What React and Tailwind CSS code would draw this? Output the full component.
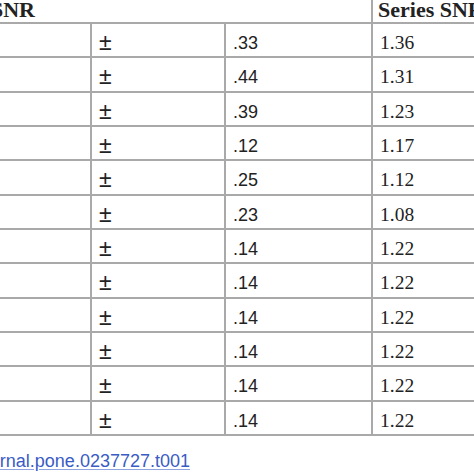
import React from 'react';

const rows = [
  { sd: '.33', series: '1.36' },
  { sd: '.44', series: '1.31' },
  { sd: '.39', series: '1.23' },
  { sd: '.12', series: '1.17' },
  { sd: '.25', series: '1.12' },
  { sd: '.23', series: '1.08' },
  { sd: '.14', series: '1.22' },
  { sd: '.14', series: '1.22' },
  { sd: '.14', series: '1.22' },
  { sd: '.14', series: '1.22' },
  { sd: '.14', series: '1.22' },
  { sd: '.14', series: '1.22' },
];

const serif = "font-['Liberation_Serif',serif]";
const sans = "font-['Liberation_Sans',Arial,sans-serif]";

const App = () => {
  return (
    <div className="w-[474px] h-[474px] overflow-hidden bg-white text-[#222]">
      <div className="w-[560px]">
        <div className="flex h-[24px] border-b-2 border-[#a9a9a9]">
          <div className="w-[373px] shrink-0 border-r-2 border-[#a9a9a9] overflow-hidden">
            <span className={`${serif} block -ml-[9px] text-[22px] leading-[19px] font-bold`}>SNR</span>
          </div>
          <div className={`${serif} pl-[5px] text-[22px] leading-[19px] font-bold whitespace-nowrap`}>Series SNR</div>
        </div>
        {rows.map((r, i) => (
          <div key={i} className="flex h-[34.33px] border-b-2 border-[#a9a9a9]">
            <div className="w-[92px] shrink-0 border-r-2 border-[#a9a9a9]" />
            <div className={`${sans} w-[134px] shrink-0 border-r-2 border-[#a9a9a9] pl-[7px] pt-[8px] text-[23px] leading-[20px] font-light`}>±</div>
            <div className={`${sans} w-[147px] shrink-0 border-r-2 border-[#a9a9a9] pl-[7px] pt-[9px] text-[18px] leading-[20px]`}>{r.sd}</div>
            <div className={`${serif} pl-[7px] pt-[9px] text-[19.5px] leading-[20px]`}>{r.series}</div>
          </div>
        ))}
      </div>
      <div className="mt-[15px] w-[190px] flex justify-end overflow-hidden">
        <span className={`${sans} whitespace-nowrap text-[18px] leading-[20px] text-[#3a5cc4] underline decoration-[#8fa3e0] underline-offset-[2px]`}>
          https://doi.org/10.1371/journal.pone.0237727.t001
        </span>
      </div>
    </div>
  );
};

export default App;
